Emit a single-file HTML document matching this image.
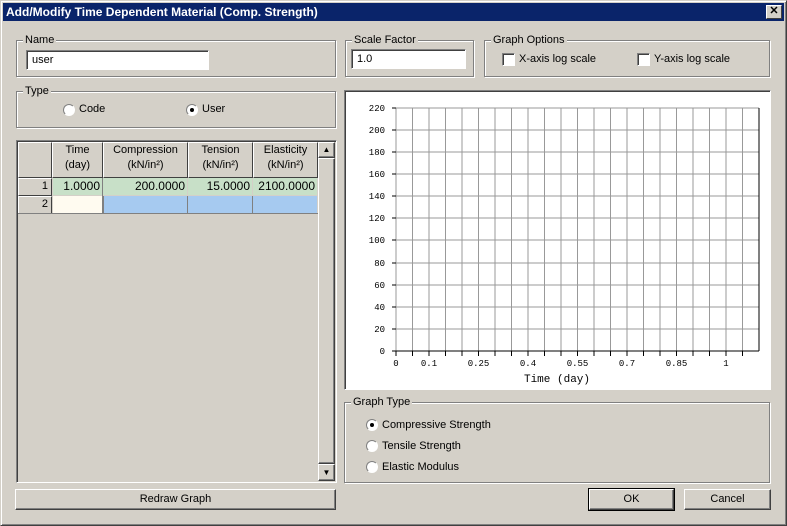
<!DOCTYPE html>
<html><head><style>
*{margin:0;padding:0;box-sizing:border-box}
body{width:787px;height:526px;background:#d4d0c8;font:11px "Liberation Sans",sans-serif;color:#000;position:relative;overflow:hidden}
.a{position:absolute}
.frame{position:absolute;left:0;top:0;width:787px;height:526px;border:1px solid;border-color:#d4d0c8 #404040 #404040 #d4d0c8;box-shadow:inset 1px 1px 0 #fff,inset -1px -1px 0 #808080}
.title{position:absolute;left:3px;top:3px;width:781px;height:18px;background:#0a246a;color:#fff;font-weight:bold;font-size:12px;line-height:18px;padding-left:3px}
.xb{position:absolute;right:5px;top:5px;width:16px;height:14px;background:#d4d0c8;border:1px solid;border-color:#fff #404040 #404040 #fff;color:#000;font-size:11px;line-height:11px;text-align:center;font-weight:bold}
.grp{position:absolute;border:1px solid #808080;box-shadow:1px 1px 0 #fff,inset 1px 1px 0 #fff}
.grp>.lg{position:absolute;top:-7px;left:6px;background:#d4d0c8;padding:0 2px;line-height:12px}
.edit{position:absolute;background:#fff;border:1px solid;border-color:#808080 #fff #fff #808080;box-shadow:inset 1px 1px 0 #404040;padding:3px 0 0 5px}
.rad{position:absolute;width:12px;height:12px;border-radius:50%;background:#fff;border:1px solid;border-color:#808080 #fff #fff #808080}
.rad.on::after{content:"";position:absolute;left:3px;top:3px;width:4px;height:4px;border-radius:50%;background:#000}
.chk{position:absolute;width:13px;height:13px;background:#fff;border:1px solid;border-color:#808080 #fff #fff #808080;box-shadow:inset 1px 1px 0 #404040}
.btn{position:absolute;background:#d4d0c8;border:1px solid;border-color:#fff #404040 #404040 #fff;box-shadow:inset -1px -1px 0 #808080;text-align:center;line-height:18px}
.hc{position:absolute;background:#d4d0c8;border:1px solid;border-color:#fff #404040 #404040 #fff;text-align:center;line-height:15px}
.c{position:absolute;text-align:right;padding-right:2px;line-height:17px;font-size:12px}
</style></head><body>
<div class="frame"></div>
<div class="title">Add/Modify Time Dependent Material (Comp. Strength)</div>
<div class="xb">✕</div>

<div class="grp" style="left:16px;top:40px;width:320px;height:37px"><span class="lg">Name</span></div>
<div class="edit" style="left:26px;top:50px;width:183px;height:20px">user</div>

<div class="grp" style="left:345px;top:40px;width:129px;height:37px"><span class="lg">Scale Factor</span></div>
<div class="edit" style="left:351px;top:49px;width:115px;height:20px">1.0</div>

<div class="grp" style="left:484px;top:40px;width:286px;height:37px"><span class="lg">Graph Options</span></div>
<div class="chk" style="left:502px;top:53px"></div><div class="a" style="left:519px;top:53px">X-axis log scale</div>
<div class="chk" style="left:637px;top:53px"></div><div class="a" style="left:654px;top:53px">Y-axis log scale</div>

<div class="grp" style="left:16px;top:91px;width:320px;height:37px"><span class="lg">Type</span></div>
<div class="rad" style="left:63px;top:104px"></div><div class="a" style="left:79px;top:103px">Code</div>
<div class="rad on" style="left:186px;top:104px"></div><div class="a" style="left:202px;top:103px">User</div>

<div class="a" style="left:16px;top:140px;width:321px;height:343px;background:#d4d0c8;border:1px solid;border-color:#808080 #fff #fff #808080;box-shadow:inset 1px 1px 0 #404040"></div>
<div class="hc" style="left:18px;top:142px;width:34px;height:36px"></div>
<div class="hc" style="left:52px;top:142px;width:51px;height:36px">Time<br>(day)</div>
<div class="hc" style="left:103px;top:142px;width:85px;height:36px">Compression<br>(kN/in²)</div>
<div class="hc" style="left:188px;top:142px;width:65px;height:36px">Tension<br>(kN/in²)</div>
<div class="hc" style="left:253px;top:142px;width:65px;height:36px">Elasticity<br>(kN/in²)</div>
<div class="hc" style="left:18px;top:178px;width:34px;height:18px;text-align:right;padding-right:3px">1</div>
<div class="hc" style="left:18px;top:196px;width:34px;height:18px;text-align:right;padding-right:3px">2</div>
<div class="c" style="left:53px;top:178px;width:49px;height:17px;background:#c8e0c8">1.0000</div>
<div class="c" style="left:103px;top:178px;width:84px;height:17px;background:#c8e0c8">200.0000</div>
<div class="c" style="left:188px;top:178px;width:64px;height:17px;background:#c8e0c8">15.0000</div>
<div class="c" style="left:253px;top:178px;width:64px;height:17px;background:#c8e0c8">2100.0000</div>
<div class="a" style="left:53px;top:196px;width:49px;height:17px;background:#fffbf0"></div>
<div class="a" style="left:103px;top:196px;width:214px;height:17px;background:#a6caf0;border-left:1px solid #808080"></div>
<div class="a" style="left:187px;top:196px;width:1px;height:17px;background:#808080"></div>
<div class="a" style="left:252px;top:196px;width:1px;height:17px;background:#808080"></div>
<div class="a" style="left:18px;top:213px;width:300px;height:1px;background:#808080"></div>
<div class="a" style="left:102px;top:178px;width:1px;height:36px;background:#808080"></div>
<div class="a" style="left:318px;top:142px;width:17px;height:339px;background:#e8e6e0"></div>
<div class="btn" style="left:318px;top:142px;width:17px;height:16px;font-size:8px;line-height:14px">▲</div>
<div class="btn" style="left:318px;top:158px;width:17px;height:306px"></div>
<div class="btn" style="left:318px;top:464px;width:17px;height:17px;font-size:8px;line-height:15px">▼</div>

<div class="a" style="left:344px;top:90px;width:427px;height:300px;background:#fff;border:1px solid;border-color:#808080 #fff #fff #808080;box-shadow:inset 1px 1px 0 #404040"></div>
<svg class="a" style="left:0;top:0" width="787" height="526" font-family="Liberation Mono,monospace" font-size="10">
<g stroke="#999" stroke-width="1" shape-rendering="crispEdges" fill="none">
<path d="M396 108V351M412.5 108V351M429 108V351M445.5 108V351M462 108V351M478.5 108V351M495 108V351M511.5 108V351M528 108V351M544.5 108V351M561 108V351M577.5 108V351M594 108V351M610.5 108V351M627 108V351M643.5 108V351M660 108V351M676.5 108V351M693 108V351M709.5 108V351M726 108V351M742.5 108V351"/>
<path d="M396 108H759M396 130H759M396 152H759M396 174H759M396 196H759M396 218H759M396 240H759M396 263H759M396 285H759M396 307H759M396 329H759"/>
</g>
<g stroke="#000" shape-rendering="crispEdges" fill="none">
<path d="M759 108V351M392 351H759"/>
<path d="M392 108H396M392 130H396M392 152H396M392 174H396M392 196H396M392 218H396M392 240H396M392 263H396M392 285H396M392 307H396M392 329H396"/>
<path d="M396 351V356M412.5 351V356M429 351V356M445.5 351V356M462 351V356M478.5 351V356M495 351V356M511.5 351V356M528 351V356M544.5 351V356M561 351V356M577.5 351V356M594 351V356M610.5 351V356M627 351V356M643.5 351V356M660 351V356M676.5 351V356M693 351V356M709.5 351V356M726 351V356M742.5 351V356"/>
</g>
<g text-anchor="end" font-size="9">
<text x="385" y="111">220</text><text x="385" y="133">200</text><text x="385" y="155">180</text><text x="385" y="177">160</text><text x="385" y="199">140</text><text x="385" y="221">120</text><text x="385" y="243">100</text><text x="385" y="266">80</text><text x="385" y="288">60</text><text x="385" y="310">40</text><text x="385" y="332">20</text><text x="385" y="354">0</text>
</g>
<g text-anchor="middle" font-size="9">
<text x="396" y="366">0</text><text x="429" y="366">0.1</text><text x="478.5" y="366">0.25</text><text x="528" y="366">0.4</text><text x="577.5" y="366">0.55</text><text x="627" y="366">0.7</text><text x="676.5" y="366">0.85</text><text x="726" y="366">1</text>
</g>
<text x="557" y="382" text-anchor="middle" font-size="11">Time (day)</text>
</svg>

<div class="grp" style="left:344px;top:402px;width:426px;height:81px"><span class="lg">Graph Type</span></div>
<div class="rad on" style="left:366px;top:419px"></div><div class="a" style="left:382px;top:419px">Compressive Strength</div>
<div class="rad" style="left:366px;top:440px"></div><div class="a" style="left:382px;top:440px">Tensile Strength</div>
<div class="rad" style="left:366px;top:461px"></div><div class="a" style="left:382px;top:461px">Elastic Modulus</div>

<div class="btn" style="left:15px;top:489px;width:321px;height:21px">Redraw Graph</div>
<div class="btn" style="left:589px;top:489px;width:85px;height:21px;outline:1px solid #000">OK</div>
<div class="btn" style="left:684px;top:489px;width:87px;height:21px">Cancel</div>
</body></html>
